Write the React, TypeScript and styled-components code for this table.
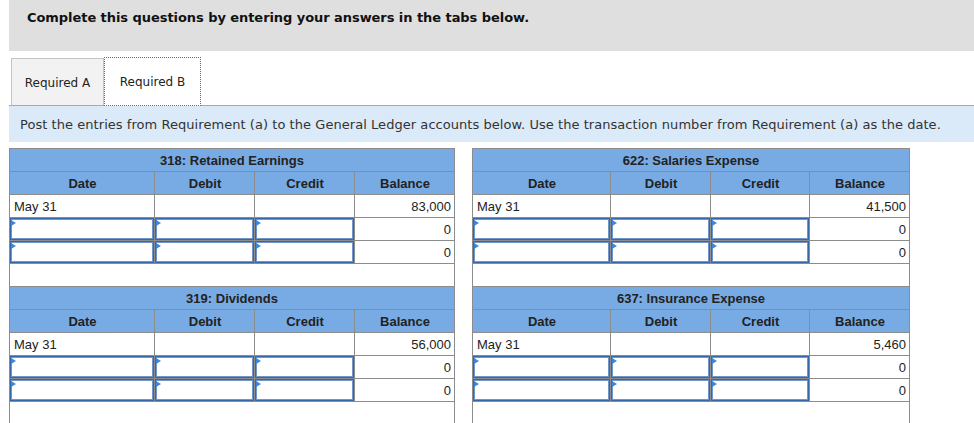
import React from "react";
import styled, { createGlobalStyle } from "styled-components";

const GlobalStyle = createGlobalStyle`
  html, body {
    margin: 0;
    padding: 0;
    background: #ffffff;
  }
  body {
    font-family: "Liberation Sans", Arial, sans-serif;
    color: #222;
  }
  * { box-sizing: border-box; }
`;

const Page = styled.div`
  padding-left: 9px;
  width: 974px;
  height: 423px;
  overflow: hidden;
`;

const Instruction = styled.div`
  background: #dfdfdf;
  height: 51px;
  padding: 10px 0 0 18px;
  font-family: "DejaVu Sans", Verdana, sans-serif;
  font-weight: bold;
  font-size: 13px;
  line-height: 16px;
  letter-spacing: -0.06px;
  color: #111;
`;

const TabBar = styled.div`
  display: flex;
  align-items: flex-end;
  height: 54px;
  padding-left: 2px;
`;

const Tab = styled.div<{ $active?: boolean }>`
  height: ${(p) => (p.$active ? "49px" : "47px")};
  display: flex;
  align-items: center;
  justify-content: center;
  font-family: "DejaVu Sans", Verdana, sans-serif;
  font-size: 12px;
  color: #222;
  width: ${(p) => (p.$active ? "97px" : "93px")};
  background: ${(p) => (p.$active ? "#ffffff" : "#f2f2f2")};
  border: ${(p) => (p.$active ? "1px dotted #2f6fd2" : "1px solid #c4c4c4")};
  border-bottom: ${(p) => (p.$active ? "1px dotted #2f6fd2" : "none")};
  margin-bottom: ${(p) => (p.$active ? "-1px" : "0")};
  padding-top: ${(p) => (p.$active ? "1px" : "2px")};
  position: relative;
  z-index: ${(p) => (p.$active ? 1 : 0)};
`;

const Prompt = styled.div`
  background: #dbeaf8;
  border-top: 1px solid #a9a9a9;
  height: 37px;
  display: flex;
  align-items: center;
  padding-left: 11px;
  font-family: "DejaVu Sans", Verdana, sans-serif;
  font-size: 13px;
  letter-spacing: 0.05px;
  color: #333;
`;

const Ledgers = styled.div`
  display: grid;
  grid-template-columns: 446px 438px;
  column-gap: 17px;
  margin-top: 6px;
  align-items: start;
`;

const Column = styled.div`
  display: flex;
  flex-direction: column;
`;

const Block = styled.div`
  border: 1px solid #8c8c8c;
  border-bottom: none;
  font-size: 13px;
`;

const Title = styled.div`
  height: 23px;
  background: #78aae3;
  border-bottom: 1px solid #8c8c8c;
  display: flex;
  align-items: center;
  justify-content: center;
  font-weight: bold;
  color: #222;
  padding-top: 1px;
`;

const Row = styled.div<{ $cols: string }>`
  display: grid;
  grid-template-columns: ${(p) => p.$cols};
  height: 23px;
  border-bottom: 1px solid #8c8c8c;
`;

const Cell = styled.div<{ $head?: boolean; $align?: "left" | "center" | "right" }>`
  display: flex;
  align-items: center;
  justify-content: ${(p) =>
    p.$align === "right" ? "flex-end" : p.$align === "center" ? "center" : "flex-start"};
  padding: 1px 3px 0 4px;
  border-right: 1px solid #8c8c8c;
  background: ${(p) => (p.$head ? "#78aae3" : "#ffffff")};
  font-weight: ${(p) => (p.$head ? "bold" : "normal")};
  color: #222;
  &:last-child {
    border-right: none;
  }
`;

const InputCell = styled.div`
  position: relative;
  border-right: 1px solid #8c8c8c;
  padding: 0;
  &::before {
    content: "";
    position: absolute;
    top: 2px;
    left: 1px;
    width: 0;
    height: 0;
    border-top: 3px solid transparent;
    border-bottom: 3px solid transparent;
    border-left: 5px solid #3b86df;
  }
`;

const Field = styled.input`
  display: block;
  width: 100%;
  height: 100%;
  margin: 0;
  padding: 0 4px;
  border: 1px solid #3767ab;
  box-shadow: inset 0 0 0 1px #6f97cd;
  background: #fff;
  font: inherit;
  outline: none;
`;

const Spacer = styled.div`
  height: 22px;
`;

type Account = {
  title: string;
  balance: string;
};

const LedgerBlock: React.FC<{ account: Account; cols: string }> = ({ account, cols }) => (
  <Block>
    <Title>{account.title}</Title>
    <Row $cols={cols}>
      <Cell $head $align="center">Date</Cell>
      <Cell $head $align="center">Debit</Cell>
      <Cell $head $align="center">Credit</Cell>
      <Cell $head $align="center">Balance</Cell>
    </Row>
    <Row $cols={cols}>
      <Cell>May 31</Cell>
      <Cell />
      <Cell />
      <Cell $align="right">{account.balance}</Cell>
    </Row>
    {[0, 1].map((i) => (
      <Row $cols={cols} key={i}>
        <InputCell>
          <Field type="text" aria-label="Date" />
        </InputCell>
        <InputCell>
          <Field type="text" aria-label="Debit" />
        </InputCell>
        <InputCell>
          <Field type="text" aria-label="Credit" />
        </InputCell>
        <Cell $align="right">0</Cell>
      </Row>
    ))}
    <Spacer />
  </Block>
);

const leftCols = "145px 100px 100px 1fr";
const rightCols = "138px 100px 99px 1fr";

const left: Account[] = [
  { title: "318: Retained Earnings", balance: "83,000" },
  { title: "319: Dividends", balance: "56,000" },
];
const right: Account[] = [
  { title: "622: Salaries Expense", balance: "41,500" },
  { title: "637: Insurance Expense", balance: "5,460" },
];

export default function App() {
  return (
    <>
      <GlobalStyle />
      <Page>
        <Instruction>Complete this questions by entering your answers in the tabs below.</Instruction>
        <TabBar>
          <Tab>Required A</Tab>
          <Tab $active>Required B</Tab>
        </TabBar>
        <Prompt>
          Post the entries from Requirement (a) to the General Ledger accounts below. Use the
          transaction number from Requirement (a) as the date.
        </Prompt>
        <Ledgers>
          <Column>
            {left.map((a) => (
              <LedgerBlock key={a.title} account={a} cols={leftCols} />
            ))}
          </Column>
          <Column>
            {right.map((a) => (
              <LedgerBlock key={a.title} account={a} cols={rightCols} />
            ))}
          </Column>
        </Ledgers>
      </Page>
    </>
  );
}
